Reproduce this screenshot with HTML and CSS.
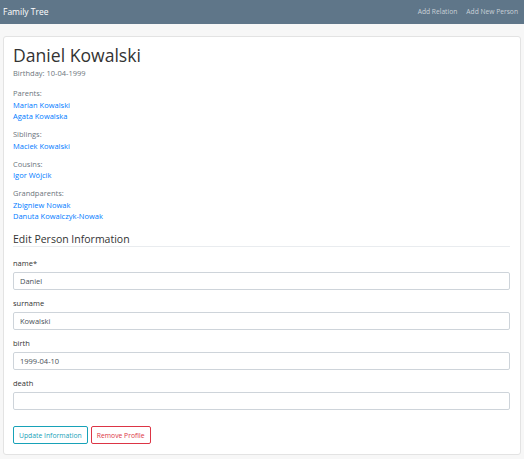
FILE: index.html
```html
<!DOCTYPE html>
<html lang="en">
<head>
  <meta charset="UTF-8">
  <meta name="viewport" content="width=device-width, initial-scale=1.0">
  <title>Family Tree</title>
  <link rel="stylesheet" href="styles.css">
</head>
<body>
  <nav class="navbar">
    <a class="brand" href="#">Family Tree</a>
    <div class="nav-links">
      <a href="#">Add Relation</a>
      <a href="#">Add New Person</a>
    </div>
  </nav>

  <main class="card">
    <h1>Daniel Kowalski</h1>
    <p class="muted">Birthday: 10-04-1999</p>

    <div class="relatives first">
      <p class="muted">Parents:</p>
      <a href="#">Marian Kowalski</a>
      <a href="#">Agata Kowalska</a>
    </div>

    <div class="relatives">
      <p class="muted">Siblings:</p>
      <a href="#">Maciek Kowalski</a>
    </div>

    <div class="relatives">
      <p class="muted">Cousins:</p>
      <a href="#">Igor Wójcik</a>
    </div>

    <div class="relatives">
      <p class="muted">Grandparents:</p>
      <a href="#">Zbigniew Nowak</a>
      <a href="#">Danuta Kowalczyk-Nowak</a>
    </div>

    <h2 class="section-title">Edit Person Information</h2>

    <form class="person-form">
      <div class="form-group">
        <label for="name">name*</label>
        <input type="text" id="name" value="Daniel">
      </div>
      <div class="form-group">
        <label for="surname">surname</label>
        <input type="text" id="surname" value="Kowalski">
      </div>
      <div class="form-group">
        <label for="birth">birth</label>
        <input type="text" id="birth" value="1999-04-10">
      </div>
      <div class="form-group">
        <label for="death">death</label>
        <input type="text" id="death" value="">
      </div>

      <div class="actions">
        <button type="button" class="btn btn-info">Update Information</button>
        <button type="button" class="btn btn-danger">Remove Profile</button>
      </div>
    </form>
  </main>
</body>
</html>
```

FILE: styles.css
```css
body {
  margin: 0;
  font-family: "Open Sans", "Noto Sans", sans-serif;
  font-size: 7.5px;
  line-height: 11.5px;
  color: #212529;
  background: #f7f7f7;
}
a { color: #007bff; text-decoration: none; }

.navbar {
  height: 24px;
  background: #5f7689;
  display: flex;
  align-items: center;
  justify-content: space-between;
  padding: 0 6px 0 3px;
}
.brand {
  color: #fff;
  font-size: 8.5px;
}
.nav-links {
  display: flex;
  gap: 9px;
}
.nav-links a {
  color: #c9d1d8;
  font-size: 6.7px;
}

.card {
  margin: 12px 3px 4px;
  padding: 6px 10px 10px 9px;
  background: #fff;
  border: 1px solid #e3e3e3;
  border-radius: 3px;
}
h1 {
  margin: 0 0 1px;
  font-size: 17.6px;
  line-height: 24px;
  font-weight: 400;
  color: #333;
}
p { margin: 0; }
.muted { color: #6c757d; }

.relatives {
  display: flex;
  flex-direction: column;
  margin-top: 6.5px;
}
.relatives.first { margin-top: 8.5px; }

.section-title {
  margin: 9px 0 0;
  font-size: 10.5px;
  line-height: 14px;
  font-weight: 400;
  color: #333;
  border-bottom: 1px solid #e9ecef;
}

.person-form { margin-top: 11px; }
.form-group { margin-bottom: 7.25px; }
.form-group label {
  display: block;
  margin-bottom: 3.25px;
  color: #333;
}
.form-group input {
  display: block;
  box-sizing: border-box;
  width: 100%;
  height: 18px;
  padding: 0 6px;
  font: inherit;
  color: #495057;
  border: 1px solid #ced4da;
  border-radius: 2px;
  background: #fff;
}

.actions {
  display: flex;
  gap: 3px;
  margin-top: 16px;
}
.btn {
  height: 18px;
  padding: 0 5px;
  font: inherit;
  font-size: 6.8px;
  background: #fff;
  border: 1px solid;
  border-radius: 2px;
}
.btn-info { color: #17a2b8; border-color: #17a2b8; }
.btn-danger { color: #dc3545; border-color: #dc3545; }
```
